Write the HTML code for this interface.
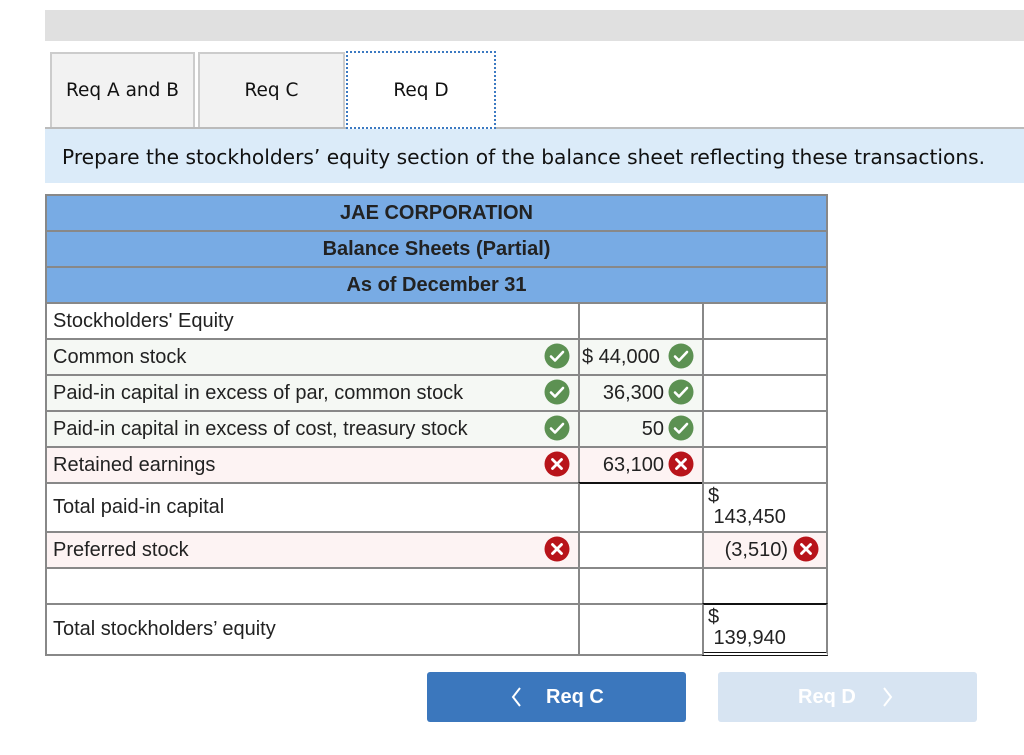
<!DOCTYPE html>
<html><head><meta charset="utf-8"><style>
body{margin:0;width:1024px;height:755px;position:relative;background:#fff;font-family:"Liberation Sans",Arial,sans-serif;color:#222;overflow:hidden}
.a{position:absolute;box-sizing:border-box}
.tab{position:absolute;box-sizing:border-box;top:52px;height:76px;border:2px solid #ccc;border-bottom:none;background:#f2f2f2;font-family:"DejaVu Sans",Verdana,sans-serif;font-size:18.5px;color:#111;text-align:center;line-height:74px}
.c{position:absolute;box-sizing:border-box;border:2px solid #888;font-size:20px;padding:0 6px;white-space:nowrap;display:flex;align-items:center}
.h{background:#78abe4;font-weight:bold;justify-content:center;color:#222}
.g{background:#f5f8f4}
.p{background:#fdf3f3}
.r{justify-content:flex-end}
</style></head><body>
<div class="a" style="left:45px;top:10px;width:979px;height:31px;background:#e0e0e0"></div>
<div class="tab" style="left:50px;width:145px">Req A and B</div>
<div class="tab" style="left:198px;width:147px">Req C</div>
<div class="tab" style="left:346px;width:150px;background:#fff;border:2px dotted #3c7ac2;height:78px;top:51px;line-height:76px">Req D</div>
<div class="a" style="left:45px;top:127px;width:301px;height:2px;background:#bbb"></div>
<div class="a" style="left:496px;top:127px;width:528px;height:2px;background:#bbb"></div>
<div class="a" style="left:45px;top:129px;width:979px;height:54px;background:#dbebf9;font-family:'DejaVu Sans',Verdana,sans-serif;font-size:20.2px;color:#111;padding-left:17px;line-height:56px;white-space:nowrap">Prepare the stockholders’ equity section of the balance sheet reflecting these transactions.</div>

<div class="c h" style="left:45px;top:194px;width:783px;height:38px">JAE CORPORATION</div>
<div class="c h" style="left:45px;top:230px;width:783px;height:38px">Balance Sheets (Partial)</div>
<div class="c h" style="left:45px;top:266px;width:783px;height:38px">As of December 31</div>

<div class="c" style="left:45px;top:302px;width:535px;height:38px">Stockholders' Equity</div>
<div class="c" style="left:578px;top:302px;width:126px;height:38px"></div>
<div class="c" style="left:702px;top:302px;width:126px;height:38px"></div>

<div class="c g" style="left:45px;top:338px;width:535px;height:38px">Common stock</div>
<div class="c g" style="left:578px;top:338px;width:126px;height:38px;padding-left:2px">$ 44,000</div>
<div class="c" style="left:702px;top:338px;width:126px;height:38px"></div>

<div class="c g" style="left:45px;top:374px;width:535px;height:38px">Paid-in capital in excess of par, common stock</div>
<div class="c g r" style="left:578px;top:374px;width:126px;height:38px;padding-right:38px">36,300</div>
<div class="c" style="left:702px;top:374px;width:126px;height:38px"></div>

<div class="c g" style="left:45px;top:410px;width:535px;height:38px">Paid-in capital in excess of cost, treasury stock</div>
<div class="c g r" style="left:578px;top:410px;width:126px;height:38px;padding-right:38px">50</div>
<div class="c" style="left:702px;top:410px;width:126px;height:38px"></div>

<div class="c p" style="left:45px;top:446px;width:535px;height:38px">Retained earnings</div>
<div class="c p r" style="left:578px;top:446px;width:126px;height:38px;padding-right:38px;border-bottom-color:#111">63,100</div>
<div class="c" style="left:702px;top:446px;width:126px;height:38px"></div>

<div class="c" style="left:45px;top:482px;width:535px;height:51px">Total paid-in capital</div>
<div class="c" style="left:578px;top:482px;width:126px;height:51px;border-top-color:#111"></div>
<div class="c" style="left:702px;top:482px;width:126px;height:51px;display:block;padding:0 4px;line-height:21px;padding-top:2px">$<br>&nbsp;143,450</div>

<div class="c p" style="left:45px;top:531px;width:535px;height:38px">Preferred stock</div>
<div class="c" style="left:578px;top:531px;width:126px;height:38px"></div>
<div class="c p r" style="left:702px;top:531px;width:126px;height:38px;padding-right:38px">(3,510)</div>

<div class="c" style="left:45px;top:567px;width:535px;height:38px"></div>
<div class="c" style="left:578px;top:567px;width:126px;height:38px"></div>
<div class="c" style="left:702px;top:567px;width:126px;height:38px;border-bottom-color:#111"></div>

<div class="c" style="left:45px;top:603px;width:535px;height:53px">Total stockholders’ equity</div>
<div class="c" style="left:578px;top:603px;width:126px;height:53px"></div>
<div class="c" style="left:702px;top:603px;width:126px;height:53px;display:block;padding:0 4px;line-height:21px;padding-top:2px;border-top-color:#111;border-bottom:4px double #111">$<br>&nbsp;139,940</div>

<svg width="1024" height="755" style="position:absolute;left:0;top:0">
<defs>
<g id="ok"><circle r="12.5" fill="#5c9152"/><path d="M-6 0.5 L-2 4.5 L6 -4" stroke="#fff" stroke-width="2.6" fill="none" stroke-linecap="round" stroke-linejoin="round"/></g>
<g id="no"><circle r="12.5" fill="#b8141a"/><path d="M-4.5 -4.5 L4.5 4.5 M4.5 -4.5 L-4.5 4.5" stroke="#fff" stroke-width="2.8" stroke-linecap="round"/></g>
</defs>
<use href="#ok" x="557" y="356"/><use href="#ok" x="681" y="356"/>
<use href="#ok" x="557" y="392"/><use href="#ok" x="681" y="392"/>
<use href="#ok" x="557" y="428"/><use href="#ok" x="681" y="428"/>
<use href="#no" x="557" y="464"/><use href="#no" x="681" y="464"/>
<use href="#no" x="557" y="549"/><use href="#no" x="806" y="549"/>
<path d="M520 688 L513 697 L520 706" stroke="#fff" stroke-width="2" fill="none"/>
<path d="M884 688 L891 697 L884 706" stroke="#fff" stroke-width="2" fill="none"/>
</svg>

<div class="a" style="left:427px;top:672px;width:259px;height:50px;background:#3b77bd;border-radius:3px;color:#fff;font-weight:bold;font-size:20px;line-height:50px;padding-left:119px">Req C</div>
<div class="a" style="left:718px;top:672px;width:259px;height:50px;background:#d7e4f2;border-radius:3px;color:#fff;font-weight:bold;font-size:20px;line-height:50px;padding-left:80px">Req D</div>
<svg width="1024" height="755" style="position:absolute;left:0;top:0">
<path d="M520 688 L513 697 L520 706" stroke="#fff" stroke-width="2" fill="none"/>
<path d="M884 688 L891 697 L884 706" stroke="#fff" stroke-width="2" fill="none"/>
</svg>
</body></html>
